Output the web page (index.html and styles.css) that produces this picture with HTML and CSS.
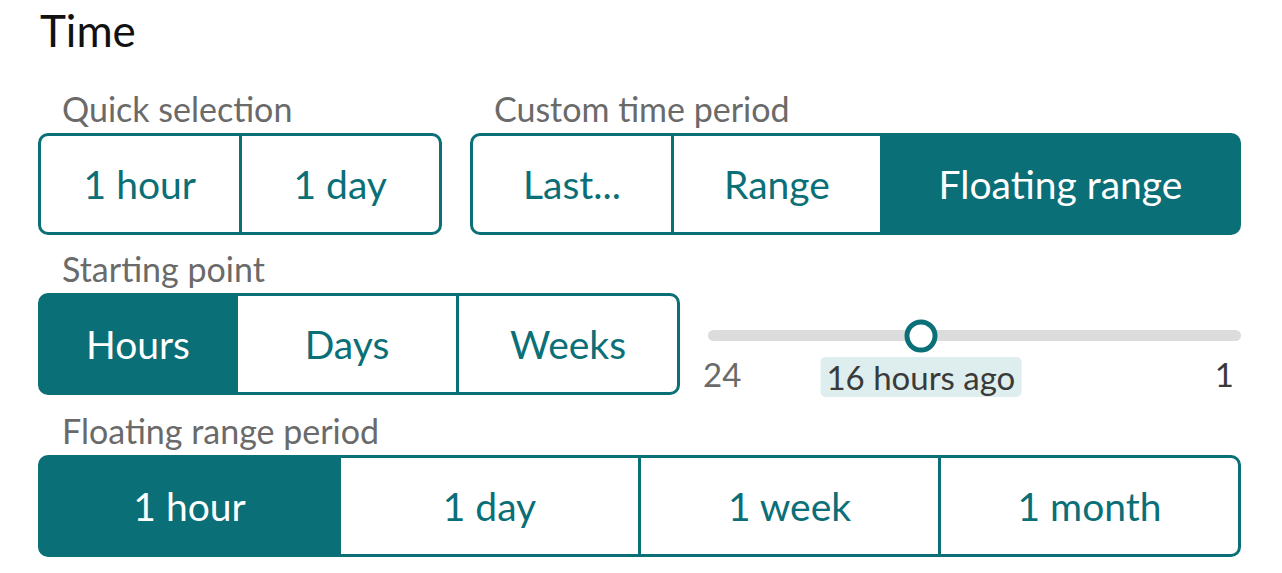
FILE: index.html
```html
<!DOCTYPE html>
<html lang="en">
<head>
    <meta charset="UTF-8">
    <meta name="viewport" content="width=device-width, initial-scale=1.0">
    <title>Time</title>
    <link rel="stylesheet" href="styles.css">
</head>
<body>
    <div class="panel">
        <h2 class="titulo">Time</h2>

        <div class="fila fila-arriba">
            <div class="campo">
                <div class="etiqueta">Quick selection</div>
                <div class="grupo grupo-rapido">
                    <button class="opcion">1 hour</button>
                    <button class="opcion">1 day</button>
                </div>
            </div>
            <div class="campo">
                <div class="etiqueta">Custom time period</div>
                <div class="grupo grupo-periodo">
                    <button class="opcion">Last...</button>
                    <button class="opcion">Range</button>
                    <button class="opcion activa">Floating range</button>
                </div>
            </div>
        </div>

        <div class="campo campo-inicio">
            <div class="etiqueta">Starting point</div>
            <div class="fila fila-inicio">
                <div class="grupo grupo-inicio">
                    <button class="opcion activa">Hours</button>
                    <button class="opcion">Days</button>
                    <button class="opcion">Weeks</button>
                </div>
                <div class="deslizador">
                    <div class="pista">
                        <div class="pulgar" style="left: 39.9%"></div>
                    </div>
                    <div class="marcas">
                        <span class="min">24</span>
                        <span class="valor" style="left: 40.5%">16 hours ago</span>
                        <span class="max">1</span>
                    </div>
                </div>
            </div>
        </div>

        <div class="campo campo-flotante">
            <div class="etiqueta">Floating range period</div>
            <div class="grupo grupo-cuatro">
                <button class="opcion activa">1 hour</button>
                <button class="opcion">1 day</button>
                <button class="opcion">1 week</button>
                <button class="opcion">1 month</button>
            </div>
        </div>
    </div>
</body>
</html>
```

FILE: styles.css
```css
:root {
    --teal: #0a6f77;
    --gris: #6a6a6a;
    --texto: #3a3a3a;
}

body {
    margin: 0;
    background: #fff;
    font-family: Lato, "Noto Sans", sans-serif;
}

.panel {
    width: 1203px;
    padding: 5px 0 0 38px;
}

.titulo {
    margin: 0 0 34px 2px;
    font-size: 44px;
    line-height: 50px;
    font-weight: 400;
    color: #111;
}

.fila {
    display: flex;
    gap: 28px;
}

.fila-arriba .campo:first-child {
    width: 404px;
}

.fila-arriba .campo:last-child {
    flex: 1;
}

.campo-inicio {
    margin-top: 14px;
}

.campo-flotante {
    margin-top: 16px;
}

.etiqueta {
    padding-left: 24px;
    margin-bottom: 4px;
    font-size: 34px;
    line-height: 40px;
    color: var(--gris);
}

/* los separadores salen del fondo que asoma por el gap */
.grupo {
    display: grid;
    gap: 3px;
    height: 102px;
    box-sizing: border-box;
    border: 3px solid var(--teal);
    border-radius: 10px;
    background: var(--teal);
    overflow: hidden;
}

.grupo-rapido {
    grid-template-columns: 1fr 1fr;
}

.grupo-periodo {
    grid-template-columns: 198px 206px 1fr;
}

.grupo-inicio {
    width: 642px;
    grid-template-columns: 194px 218px 1fr;
}

.grupo-cuatro {
    grid-template-columns: repeat(4, 1fr);
}

.opcion {
    margin: 0;
    padding: 0;
    border: none;
    background: #fff;
    color: var(--teal);
    font-family: inherit;
    font-size: 39px;
    cursor: pointer;
}

.opcion.activa {
    background: var(--teal);
    color: #fff;
}

.deslizador {
    flex: 1;
    padding-top: 37px;
}

.pista {
    position: relative;
    height: 11px;
    border-radius: 6px;
    background: #dcdcdc;
}

.pulgar {
    position: absolute;
    top: 50%;
    width: 33px;
    height: 33px;
    box-sizing: border-box;
    border: 5px solid var(--teal);
    border-radius: 50%;
    background: #fff;
    transform: translate(-50%, -50%);
}

.marcas {
    position: relative;
    display: flex;
    justify-content: space-between;
    margin-top: 13px;
    padding: 0 7px 0 0;
    margin-left: -5px;
    font-size: 33px;
    line-height: 40px;
}

.min {
    color: var(--gris);
}

.max {
    color: var(--texto);
}

.valor {
    position: absolute;
    top: 3px;
    padding: 0 6px;
    border-radius: 5px;
    background: #deeeee;
    color: var(--texto);
    font-size: 33px;
    transform: translateX(-50%);
    white-space: nowrap;
}
```
